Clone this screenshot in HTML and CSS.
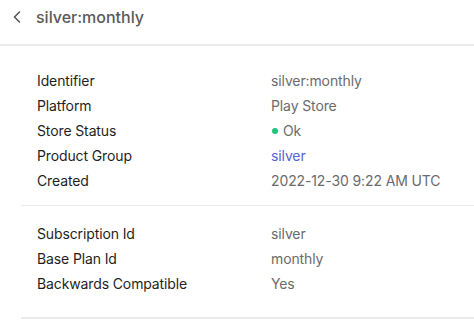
FILE: index.html
```html
<!DOCTYPE html>
<html lang="en">

<head>
    <meta charset="UTF-8">
    <meta name="viewport" content="width=device-width, initial-scale=1.0">
    <title>silver:monthly</title>
    <link rel="stylesheet" href="styles.css">
</head>

<body>
    <!-- Header -->
    <div class="header">
        <a class="back" href="#">
            <svg width="8" height="12" viewBox="0 0 8 12">
                <path d="M6.5 1 L1.5 6 L6.5 11" fill="none" stroke="#555" stroke-width="1.6" stroke-linecap="round" stroke-linejoin="round" />
            </svg>
        </a>
        <h1>silver:monthly</h1>
    </div>

    <div class="content">
        <!-- Product details -->
        <div class="section first">
            <div class="row">
                <span class="label">Identifier</span>
                <span class="value">silver:monthly</span>
            </div>
            <div class="row">
                <span class="label">Platform</span>
                <span class="value">Play Store</span>
            </div>
            <div class="row">
                <span class="label">Store Status</span>
                <span class="value"><span class="dot"></span>Ok</span>
            </div>
            <div class="row">
                <span class="label">Product Group</span>
                <span class="value"><a href="#">silver</a></span>
            </div>
            <div class="row">
                <span class="label">Created</span>
                <span class="value">2022-12-30 9:22 AM UTC</span>
            </div>
        </div>

        <!-- Play Store details -->
        <div class="section second">
            <div class="row">
                <span class="label">Subscription Id</span>
                <span class="value">silver</span>
            </div>
            <div class="row">
                <span class="label">Base Plan Id</span>
                <span class="value">monthly</span>
            </div>
            <div class="row">
                <span class="label">Backwards Compatible</span>
                <span class="value">Yes</span>
            </div>
        </div>
    </div>
</body>

</html>
```

FILE: styles.css
```css
:root {
    --color-text: #1f1f1f;
    --color-muted: #6b6b6b;
    --color-border: #ebebeb;
    --color-link: #5664d2;
    --color-ok: #22c47a;
}

* {
    margin: 0;
    padding: 0;
    box-sizing: border-box;
    font-family: Inter, 'Noto Sans', sans-serif;
}

body {
    background-color: white;
}

/* Header */
.header {
    display: flex;
    align-items: center;
    height: 46px;
    padding: 0 0 10px 13px;
    border-bottom: 2px solid var(--color-border);
}

.back {
    display: flex;
    width: 23px;
}

.header h1 {
    font-size: 16px;
    font-weight: 500;
    color: #5a5a5a;
}

/* Detail sections */
.content {
    margin-left: 21px;
}

.section {
    padding-left: 16px;
    border-bottom: 1px solid var(--color-border);
}

.section.first {
    padding-top: 22px;
    padding-bottom: 12px;
}

.section.second {
    padding-top: 15px;
    padding-bottom: 21px;
    border-bottom-width: 2px;
}

.row {
    display: grid;
    grid-template-columns: 234px 1fr;
    height: 25px;
    align-items: center;
    font-size: 14px;
    letter-spacing: -0.12px;
}

.label {
    color: var(--color-text);
}

.value {
    display: flex;
    align-items: center;
    color: var(--color-muted);
}

.value a {
    color: var(--color-link);
    text-decoration: none;
}

.dot {
    width: 6px;
    height: 6px;
    border-radius: 50%;
    background-color: var(--color-ok);
    margin: 0 5px 0 1px;
}
```
